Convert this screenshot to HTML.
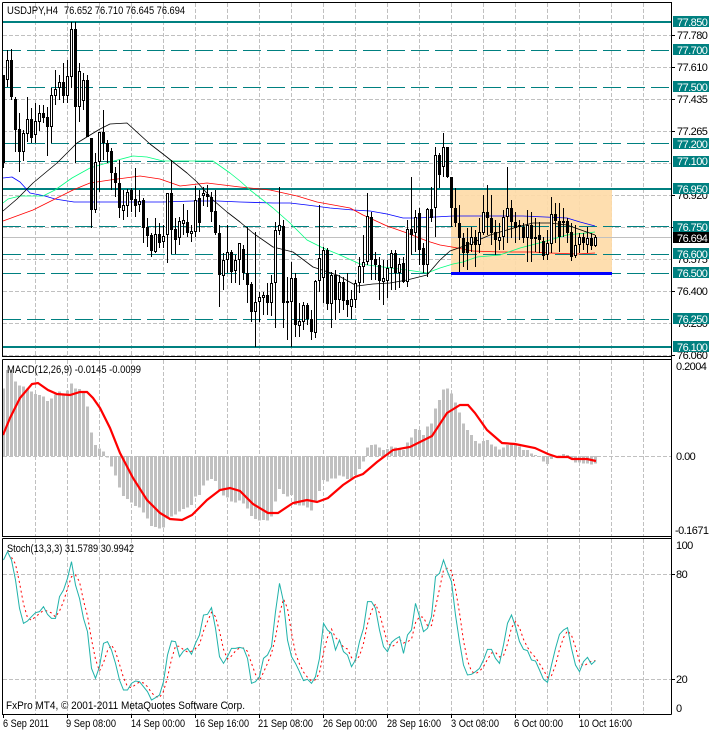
<!DOCTYPE html>
<html><head><meta charset="utf-8"><title>USDJPY,H4</title>
<style>
html,body{margin:0;padding:0;background:#fff;width:709px;height:731px;overflow:hidden}
svg{display:block;font-family:"Liberation Sans",sans-serif;font-size:11px;fill:#000}
.ax{letter-spacing:-.55px}
.lb{letter-spacing:-.55px;fill:#fff}
path,polyline,line{vector-effect:non-scaling-stroke}
</style></head><body>
<svg xmlns="http://www.w3.org/2000/svg" width="709" height="731" viewBox="0 0 709 731">
<rect width="709" height="731" fill="#fff"/>
<!-- grid -->
<g shape-rendering="crispEdges" fill="none" stroke="#c0c0c0" stroke-dasharray="4 2">
<path d="M3 35.5H671M3 67.5H671M3 99.5H671M3 131.5H671M3 163.5H671M3 195.5H671M3 227.5H671M3 259.5H671M3 291.5H671M3 323.5H671M3 355.5H671"/>
<path d="M35.5 3V356M67.5 3V356M99.5 3V356M131.5 3V356M163.5 3V356M195.5 3V356M227.5 3V356M259.5 3V356M291.5 3V356M323.5 3V356M355.5 3V356M387.5 3V356M419.5 3V356M451.5 3V356M483.5 3V356M515.5 3V356M547.5 3V356M579.5 3V356M611.5 3V356M643.5 3V356"/>
<path d="M35.5 360V536M67.5 360V536M99.5 360V536M131.5 360V536M163.5 360V536M195.5 360V536M227.5 360V536M259.5 360V536M291.5 360V536M323.5 360V536M355.5 360V536M387.5 360V536M419.5 360V536M451.5 360V536M483.5 360V536M515.5 360V536M547.5 360V536M579.5 360V536M611.5 360V536M643.5 360V536M3 456.5H671"/>
<path d="M35.5 539V714M67.5 539V714M99.5 539V714M131.5 539V714M163.5 539V714M195.5 539V714M227.5 539V714M259.5 539V714M291.5 539V714M323.5 539V714M355.5 539V714M387.5 539V714M419.5 539V714M451.5 539V714M483.5 539V714M515.5 539V714M547.5 539V714M579.5 539V714M611.5 539V714M643.5 539V714M3 574.5H671M3 679.5H671"/>
</g>
<!-- box -->
<rect x="451" y="189" width="161" height="84" fill="#fedba8" fill-opacity=".92"/>
<!-- current price line -->
<path d="M3 237.5H671" stroke="#c0c0c0" fill="none" shape-rendering="crispEdges"/>
<!-- levels -->
<g fill="none" stroke="#008080" shape-rendering="crispEdges">
<path stroke-dasharray="18 6" d="M3 50.5H671M3 87.5H671M3 143.5H671M3 161.5H671M3 226.5H671M3 254.5H671M3 273.5H671M3 319.5H671"/>
<path stroke-width="2" d="M3 22H671M3 189H671M3 347H671"/>
</g>
<rect x="451" y="272" width="161" height="3" fill="#0000ff"/>
<!-- moving averages -->
<g fill="none" stroke-width=".8" stroke-linejoin="round">
<polyline stroke="#0000ff" points="3,178 12,177 20,182 30,193 45,196 55,199 74,202 113,202 163,202 193,201 217,201 240,202 273,203 290,203 307,205 330,208 353,210 370,211 387,214 403,218 417,218 453,216 483,216 523,216 567,218 580,222 595,226"/>
<polyline stroke="#ff0000" points="3,221 33,210 73,190 85,185 90,183 110,180 140,176 160,179 180,186 207,183 240,187 250,188 270,190 297,196 317,202 350,208 363,215 387,226 407,233 427,241 440,245 452,247 473,251 500,252 533,252 550,253 577,254 595,253"/>
<polyline stroke="#00ff7f" points="3,203 8,199 20,196 43,196 55,190 72,178 90,168 110,162 133,156 147,157 163,161 213,161 230,173 240,181 250,190 273,208 290,223 307,240 323,248 340,255 360,264 383,267 407,270 427,273 440,268 453,264 463,262 477,257 500,255 520,248 543,242 567,235 595,232"/>
<polyline stroke="#000000" points="3,211 17,199 33,183 57,163 77,143 100,129 110,124 127,123 150,144 163,154 187,173 197,182 213,200 227,212 240,222 253,233 273,247 293,252 313,267 337,275 357,286 373,284 390,283 407,280 427,275 440,260 450,251 467,245 490,235 517,227 533,223 550,223 567,225 595,235"/>
</g>
<!-- candles -->
<g transform="translate(3.5,0) scale(4,1)" fill="none" shape-rendering="crispEdges">
<path stroke="#000" stroke-width="1" d="M0 75V168M1 50V87M2 49V100M3 97V152M4 113V172M5 130V161M6 97V142M7 108V143M8 103V143M9 105V131M10 105V123M11 107V156M12 88V143M13 70V105M14 75V100M15 63V103M16 60V103M17 22V88M18 22V163M19 63V122M20 73V110M21 75V137M22 138V228M23 153V213M24 132V192M25 110V160M26 140V163M27 148V190M28 167V197M29 160V218M30 190V220M31 189V217M32 188V212M33 168V217M34 190V212M35 198V243M36 218V247M37 233V257M38 218V253M39 223V248M40 225V248M41 194V263M42 160V254M43 218V254M44 217V245M45 204V235M46 210V237M47 225V242M48 186V237M49 190V232M50 187V206M51 185V207M52 192V222M53 190V235M54 225V307M55 253V290M56 225V273M57 250V283M58 255V283M59 243V285M60 245V280M61 227V303M62 282V322M63 232V347M64 292V322M65 292V315M66 283V315M67 275V316M68 222V328M69 187V235M70 220V328M71 277V340M72 262V347M73 273V337M74 303V337M75 302V330M76 303V325M77 310V340M78 280V338M79 205V292M80 247V303M81 248V310M82 272V328M83 270V320M84 275V313M85 277V310M86 273V317M87 290V319M88 280V308M89 257V293M90 235V283M91 193V265M92 212V280M93 252V280M94 257V300M95 260V305M96 260V298M97 250V290M98 250V290M99 258V288M100 257V283M101 220V287M102 177V255M103 210V252M104 208V265M105 243V273M106 208V277M107 187V222M108 147V237M109 153V188M110 133V177M111 147V178M112 177V227M113 188V227M114 205V272M115 233V267M116 228V270M117 227V252M118 230V267M119 218V253M120 195V235M121 185V235M122 195V245M123 220V255M124 223V250M125 210V250M126 167V243M127 200V238M128 212V243M129 220V240M130 223V243M131 210V262M132 212V262M133 218V252M134 222V253M135 237V260M136 230V260M137 197V253M138 203V243M139 203V252M140 208V237M141 218V243M142 223V261M143 225V258M144 233V253M145 233V250M146 227V253M147 233V250M148 235V247"/>
<path stroke="#000" stroke-width="3" d="M0 75V163M1 60V80M2 60V97M3 99V130M4 129V152M5 133V152M6 119V134M7 119V138M8 121V135M9 113V122M10 113V118M11 117V127M12 95V127M13 89V96M14 82V88M15 82V96M16 76V96M17 29V77M18 29V107M19 71V107M20 80V101M21 80V137M22 138V210M23 162V210M24 132V162M25 132V143M26 143V152M27 151V173M28 173V183M29 183V208M30 205V211M31 192V206M32 190V200M33 199V206M34 201V205M35 200V228M36 227V236M37 235V251M38 234V252M39 234V243M40 236V242M41 193V235M42 193V230M43 229V240M44 221V238M45 220V224M46 222V233M47 231V234M48 200V232M49 198V223M50 193V196M51 194V197M52 197V212M53 211V233M54 233V275M55 260V276M56 252V260M57 252V272M58 260V271M59 243V260M60 249V273M61 273V285M62 284V312M63 302V312M64 297V302M65 295V298M66 295V303M67 283V303M68 230V283M69 225V231M70 226V303M71 301V303M72 278V302M73 278V325M74 321V326M75 305V322M76 305V319M77 319V332M78 281V333M79 258V281M80 250V278M81 250V304M82 275V304M83 275V300M84 282V300M85 282V301M86 300V305M87 299V307M88 283V300M89 266V283M90 262V267M91 216V262M92 217V260M93 259V265M94 265V281M95 278V282M96 268V281M97 253V268M98 253V273M99 264V273M100 263V282M101 229V282M102 229V235M103 217V233M104 213V250M105 248V265M106 209V265M107 209V218M108 155V208M109 155V175M110 147V167M111 147V177M112 177V208M113 208V223M114 223V238M115 238V253M116 242V253M117 237V245M118 237V245M119 232V245M120 212V233M121 212V218M122 218V233M123 232V240M124 237V241M125 217V237M126 208V217M127 208V222M128 222V228M129 225V227M130 227V238M131 225V238M132 225V239M133 237V239M134 235V240M135 241V256M136 243V255M137 214V244M138 214V221M139 221V237M140 221V223M141 221V233M142 232V257M143 245V256M144 237V245M145 237V243M146 238V245M147 238V246M148 237V246"/>
<path stroke="#fff" stroke-width="1" d="M1 61V79M5 134V151M6 120V133M8 122V134M9 114V121M12 96V126M13 90V95M14 83V87M16 77V95M17 30V76M19 72V106M20 81V100M23 163V209M24 133V161M30 206V210M31 193V205M34 202V204M38 235V251M40 237V241M41 194V234M44 222V237M45 221V223M47 232V233M48 201V231M50 194V195M55 261V275M56 253V259M58 261V270M59 244V259M63 303V311M64 298V301M65 296V297M67 284V302M68 231V282M69 226V230M72 279V301M74 322V325M75 306V321M78 282V332M79 259V280M80 251V277M82 276V303M84 283V299M87 300V306M88 284V299M89 267V282M90 263V266M91 217V261M95 279V281M96 269V280M97 254V267M99 265V272M101 230V281M103 218V232M106 210V264M108 156V207M110 148V166M117 238V244M119 233V244M120 213V232M124 238V240M125 218V236M126 209V216M131 226V237M136 244V254M137 215V243M143 246V255M144 238V244M146 239V244M148 238V245"/>
</g>
<!-- MACD -->
<g transform="translate(3.5,355) scale(4,.33333)" fill="none" shape-rendering="crispEdges">
<path stroke="#c0c0c0" stroke-width="3" d="M0 303V100M1 303V45M2 303V45M3 303V80M4 303V92M5 303V95M6 303V100M7 303V110M8 303V117M9 303V120M10 303V125M11 303V138M12 303V130M13 303V118M14 303V110M15 303V115M16 303V107M17 303V85M18 303V100M19 303V102M20 303V110M21 303V155M22 303V233M23 303V270M24 303V280M25 303V290M26 303V308M27 303V335M28 303V362M29 303V397M30 303V423M31 303V432M32 303V443M33 303V453M34 303V458M35 303V473M36 303V490M37 303V513M38 303V516M39 303V520M40 303V518M41 303V490M42 303V485M43 303V478M44 303V470M45 303V462M46 303V458M47 303V450M48 303V425M49 303V420M50 303V392M51 303V377M52 303V372M53 303V378M54 303V408M55 303V422M56 303V428M57 303V440M58 303V443M59 303V437M60 303V445M61 303V460M62 303V483M63 303V492M64 303V497M65 303V495M66 303V497M67 303V485M68 303V440M69 303V402M70 303V417M71 303V425M72 303V420M73 303V450M74 303V452M75 303V452M76 303V458M77 303V467M78 303V442M79 303V408M80 303V375M81 303V380M82 303V370M83 303V370M84 303V362M85 303V365M86 303V372M87 303V370M88 303V360M89 303V342M90 303V320M91 303V278M92 303V270M93 303V268M94 303V277M95 303V285M96 303V282M97 303V274M98 303V278M99 303V282M100 303V285M101 303V262M102 303V247M103 303V222M104 303V225M105 303V240M106 303V215M107 303V205M108 303V160M109 303V135M110 303V103M111 303V100M112 303V115M113 303V142M114 303V172M115 303V205M116 303V225M117 303V240M118 303V258M119 303V265M120 303V258M121 303V255M122 303V268M123 303V275M124 303V283M125 303V278M126 303V270M127 303V268M128 303V270M129 303V275M130 303V285M131 303V285M132 303V295M133 303V300M134 303V306M135 303V320M136 303V327M137 303V312M138 303V306M139 303V302M140 303V297M141 303V300M142 303V312M143 303V323M144 303V322M145 303V325M146 303V325M147 303V328M148 303V325"/>
</g>
<polyline fill="none" stroke="#ff0000" stroke-width="2.2" points="3,435 10,418 20,398 32,384 38,383 48,390 57,394 70,395 80,392 87,392 93,398 100,408 110,428 120,453 133,478 147,500 160,513 170,519 182,520 192,515 207,500 220,490 230,488 240,491 253,504 268,513 278,513 293,503 307,500 317,502 328,498 343,485 355,477 363,474 377,462 393,450 410,447 432,436 447,413 460,405 468,405 475,413 487,430 502,443 515,444 535,448 548,454 557,457 568,457 572,459 587,459 596,461"/>
<!-- Stochastic -->
<g transform="translate(3.5,535) scale(4,.33333)" fill="none">
<polyline stroke="#ff0000" stroke-dasharray="2 3" points="2,67 3,87 4,143 5,207 6,248 7,256 8,245 9,236 10,226 11,228 12,234 13,246 14,228 15,200 16,160 17,125 18,120 19,140 20,197 21,243 22,313 23,373 24,408 25,383 26,347 27,330 28,350 29,388 30,428 31,455 32,458 33,449 34,441 35,444 36,455 37,473 38,484 39,488 40,469 41,427 42,373 43,333 44,334 45,344 46,351 47,349 48,341 49,328 50,288 51,259 52,232 53,245 54,288 55,343 56,372 57,363 58,348 59,339 60,339 61,349 62,385 63,418 64,437 65,412 66,385 67,355 68,308 69,237 70,192 71,220 72,293 73,355 74,387 75,411 76,427 77,438 78,434 79,413 80,353 81,307 82,282 83,308 84,318 85,337 86,342 87,368 88,377 89,363 90,325 91,267 92,227 93,207 94,235 95,280 96,323 97,336 98,328 99,313 100,324 101,320 102,313 103,263 104,245 105,247 106,272 107,272 108,217 109,162 110,105 111,100 112,108 113,163 114,233 115,317 116,377 117,409 118,416 119,409 120,395 121,373 122,354 123,352 124,366 125,362 126,327 127,278 128,260 129,278 130,313 131,337 132,355 133,367 134,386 135,405 136,427 137,422 138,391 139,343 140,308 141,287 142,301 143,336 144,380 145,393 146,386 147,378 148,377"/>
<polyline stroke="#20b2aa" points="0,75 1,50 2,75 3,135 4,220 5,265 6,258 7,245 8,233 9,230 10,215 11,238 12,250 13,250 14,185 15,165 16,130 17,80 18,150 19,190 20,250 21,290 22,400 23,430 24,395 25,325 26,320 27,345 28,385 29,435 30,465 31,465 32,445 33,438 34,440 35,455 36,470 37,495 38,488 39,480 40,440 41,360 42,318 43,320 44,365 45,348 46,340 47,358 48,325 49,300 50,240 51,238 52,218 53,280 54,365 55,385 56,365 57,340 58,340 59,337 60,340 61,370 62,445 63,440 64,425 65,370 66,360 67,335 68,230 69,145 70,200 71,315 72,365 73,385 74,410 75,437 76,433 77,445 78,425 79,370 80,265 81,285 82,295 83,345 84,315 85,350 86,360 87,395 88,375 89,320 90,280 91,200 92,200 93,220 94,285 95,335 96,350 97,322 98,312 99,305 100,355 101,300 102,285 103,205 104,245 105,290 106,280 107,245 108,125 109,115 110,75 111,110 112,140 113,240 114,320 115,390 116,420 117,418 118,410 119,400 120,375 121,343 122,343 123,370 124,385 125,330 126,265 127,240 128,275 129,320 130,343 131,347 132,375 133,378 134,405 135,433 136,442 137,390 138,340 139,298 140,285 141,278 142,340 143,390 144,410 145,380 146,367 147,388 148,377"/>
</g>
<!-- frames -->
<g fill="none" stroke="#000" shape-rendering="crispEdges">
<path d="M2.5 2.5H671.5V714.5M2.5 2.5V356.5H671.5M2.5 359.5H671.5M2.5 359.5V536.5H671.5M2.5 538.5H671.5M2.5 538.5V714.5H671.5"/>
<path d="M671 35.5H675M671 67.5H675M671 99.5H675M671 131.5H675M671 195.5H675M671 227.5H675M671 291.5H675M671 355.5H675M671 574.5H675M671 679.5H675M3.5 714V718M67.5 714V718M131.5 714V718M195.5 714V718M259.5 714V718M323.5 714V718M387.5 714V718M451.5 714V718M515.5 714V718M579.5 714V718"/>
</g>
<!-- legends -->
<text x="7" y="14" textLength="51" lengthAdjust="spacingAndGlyphs">USDJPY,H4</text>
<text x="64" y="14" textLength="121" lengthAdjust="spacingAndGlyphs">76.652 76.710 76.645 76.694</text>
<text x="7" y="373" textLength="134" lengthAdjust="spacingAndGlyphs">MACD(12,26,9) -0.0145 -0.0099</text>
<text x="7" y="552" textLength="127" lengthAdjust="spacingAndGlyphs">Stoch(13,3,3) 31.5789 30.9942</text>
<text x="6" y="709" textLength="239" lengthAdjust="spacingAndGlyphs">FxPro MT4, © 2001-2011 MetaQuotes Software Corp.</text>
<!-- axis -->
<g class="ax">
<text class="ax" x="677" y="39">77.780</text>
<text class="ax" x="677" y="71">77.610</text>
<text class="ax" x="677" y="103">77.435</text>
<text class="ax" x="677" y="135">77.265</text>
<text class="ax" x="677" y="167">77.095</text>
<text class="ax" x="677" y="199">76.920</text>
<text class="ax" x="677" y="263">76.575</text>
<text class="ax" x="677" y="295">76.400</text>
<text class="ax" x="677" y="327">76.230</text>
<text class="ax" x="677" y="359">76.060</text>
<text class="ax" x="676" y="370">0.2004</text>
<text class="ax" x="676" y="460">0.00</text>
<text class="ax" x="675" y="534">-0.1671</text>
<text class="ax" x="676" y="549">100</text>
<text class="ax" x="676" y="578">80</text>
<text class="ax" x="676" y="683">20</text>
<text class="ax" x="676" y="712">0</text>
</g>
<g fill="#008080">
<rect x="673" y="16" width="36" height="11"/>
<rect x="673" y="44" width="36" height="11"/>
<rect x="673" y="81" width="36" height="11"/>
<rect x="673" y="138" width="36" height="11"/>
<rect x="673" y="156" width="36" height="11"/>
<rect x="673" y="183" width="36" height="11"/>
<rect x="673" y="221" width="36" height="11"/>
<rect x="673" y="248" width="36" height="11"/>
<rect x="673" y="267" width="36" height="11"/>
<rect x="673" y="313" width="36" height="11"/>
<rect x="673" y="341" width="36" height="11"/>
</g>
<rect x="673" y="232" width="36" height="11" fill="#000"/>
<text class="lb" x="677" y="26">77.850</text>
<text class="lb" x="677" y="54">77.700</text>
<text class="lb" x="677" y="91">77.500</text>
<text class="lb" x="677" y="148">77.200</text>
<text class="lb" x="677" y="165">77.100</text>
<text class="lb" x="677" y="193">76.950</text>
<text class="lb" x="677" y="231">76.750</text>
<text class="lb" x="677" y="242">76.694</text>
<text class="lb" x="677" y="258">76.600</text>
<text class="lb" x="677" y="277">76.500</text>
<text class="lb" x="677" y="323">76.250</text>
<text class="lb" x="677" y="351">76.100</text>
<!-- dates -->
<text x="3" y="727" textLength="46" lengthAdjust="spacingAndGlyphs">6 Sep 2011</text>
<text x="66" y="727" textLength="50" lengthAdjust="spacingAndGlyphs">9 Sep 08:00</text>
<text x="131" y="727" textLength="54" lengthAdjust="spacingAndGlyphs">14 Sep 00:00</text>
<text x="195" y="727" textLength="54" lengthAdjust="spacingAndGlyphs">16 Sep 16:00</text>
<text x="258" y="727" textLength="55" lengthAdjust="spacingAndGlyphs">21 Sep 08:00</text>
<text x="323" y="727" textLength="54" lengthAdjust="spacingAndGlyphs">26 Sep 00:00</text>
<text x="387" y="727" textLength="54" lengthAdjust="spacingAndGlyphs">28 Sep 16:00</text>
<text x="451" y="727" textLength="48" lengthAdjust="spacingAndGlyphs">3 Oct 08:00</text>
<text x="514" y="727" textLength="49" lengthAdjust="spacingAndGlyphs">6 Oct 00:00</text>
<text x="579" y="727" textLength="53" lengthAdjust="spacingAndGlyphs">10 Oct 16:00</text>
</svg>
</body></html>
